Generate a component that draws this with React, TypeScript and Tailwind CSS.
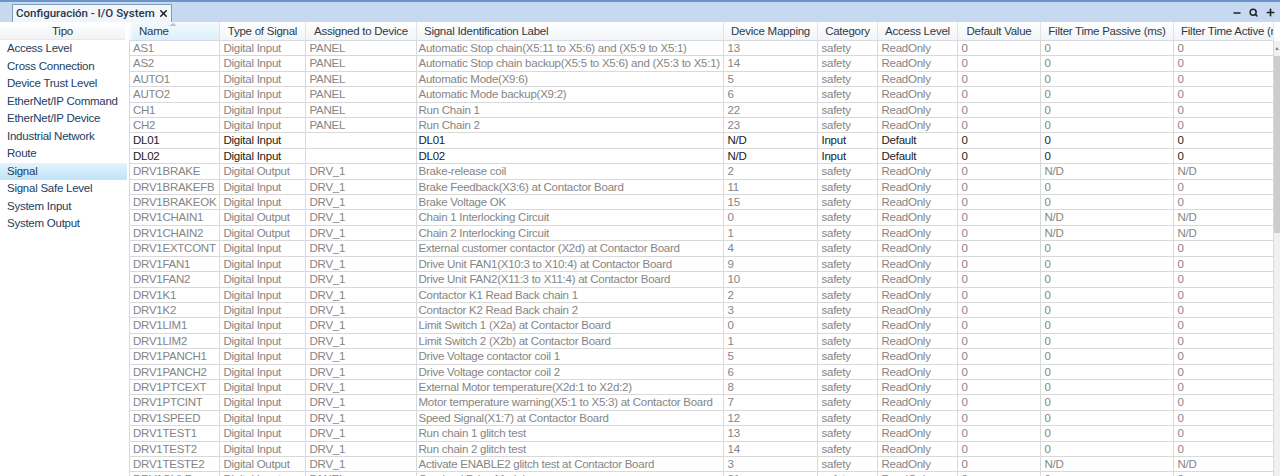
import React from 'react';
import { X, Search, Minus, Plus } from 'lucide-react';

const tipos = [
  'Access Level',
  'Cross Connection',
  'Device Trust Level',
  'EtherNet/IP Command',
  'EtherNet/IP Device',
  'Industrial Network',
  'Route',
  'Signal',
  'Signal Safe Level',
  'System Input',
  'System Output',
];

const columns = [
  { label: 'Name', width: 'w-[91px]' },
  { label: 'Type of Signal', width: 'w-[86px]' },
  { label: 'Assigned to Device', width: 'w-[111px]' },
  { label: 'Signal Identification Label', width: 'w-[307px]' },
  { label: 'Device Mapping', width: 'w-[94px]' },
  { label: 'Category', width: 'w-[60px]' },
  { label: 'Access Level', width: 'w-[80px]' },
  { label: 'Default Value', width: 'w-[83px]' },
  { label: 'Filter Time Passive (ms)', width: 'w-[133px]' },
  { label: 'Filter Time Active (ms)', width: 'w-[100px]' },
];

const DI = 'Digital Input';
const DO = 'Digital Output';

// name, type, device, label, mapping, passive/active filter
const signals: [string, string, string, string, string, string?][] = [
  ['AS1', DI, 'PANEL', 'Automatic Stop chain(X5:11 to X5:6) and (X5:9 to X5:1)', '13'],
  ['AS2', DI, 'PANEL', 'Automatic Stop chain backup(X5:5 to X5:6) and (X5:3 to X5:1)', '14'],
  ['AUTO1', DI, 'PANEL', 'Automatic Mode(X9:6)', '5'],
  ['AUTO2', DI, 'PANEL', 'Automatic Mode backup(X9:2)', '6'],
  ['CH1', DI, 'PANEL', 'Run Chain 1', '22'],
  ['CH2', DI, 'PANEL', 'Run Chain 2', '23'],
  ['DL01', DI, '', 'DL01', 'N/D'],
  ['DL02', DI, '', 'DL02', 'N/D'],
  ['DRV1BRAKE', DO, 'DRV_1', 'Brake-release coil', '2', 'N/D'],
  ['DRV1BRAKEFB', DI, 'DRV_1', 'Brake Feedback(X3:6) at Contactor Board', '11'],
  ['DRV1BRAKEOK', DI, 'DRV_1', 'Brake Voltage OK', '15'],
  ['DRV1CHAIN1', DO, 'DRV_1', 'Chain 1 Interlocking Circuit', '0', 'N/D'],
  ['DRV1CHAIN2', DO, 'DRV_1', 'Chain 2 Interlocking Circuit', '1', 'N/D'],
  ['DRV1EXTCONT', DI, 'DRV_1', 'External customer contactor (X2d) at Contactor Board', '4'],
  ['DRV1FAN1', DI, 'DRV_1', 'Drive Unit FAN1(X10:3 to X10:4) at Contactor Board', '9'],
  ['DRV1FAN2', DI, 'DRV_1', 'Drive Unit FAN2(X11:3 to X11:4) at Contactor Board', '10'],
  ['DRV1K1', DI, 'DRV_1', 'Contactor K1 Read Back chain 1', '2'],
  ['DRV1K2', DI, 'DRV_1', 'Contactor K2 Read Back chain 2', '3'],
  ['DRV1LIM1', DI, 'DRV_1', 'Limit Switch 1 (X2a) at Contactor Board', '0'],
  ['DRV1LIM2', DI, 'DRV_1', 'Limit Switch 2 (X2b) at Contactor Board', '1'],
  ['DRV1PANCH1', DI, 'DRV_1', 'Drive Voltage contactor coil 1', '5'],
  ['DRV1PANCH2', DI, 'DRV_1', 'Drive Voltage contactor coil 2', '6'],
  ['DRV1PTCEXT', DI, 'DRV_1', 'External Motor temperature(X2d:1 to X2d:2)', '8'],
  ['DRV1PTCINT', DI, 'DRV_1', 'Motor temperature warning(X5:1 to X5:3) at Contactor Board', '7'],
  ['DRV1SPEED', DI, 'DRV_1', 'Speed Signal(X1:7) at Contactor Board', '12'],
  ['DRV1TEST1', DI, 'DRV_1', 'Run chain 1 glitch test', '13'],
  ['DRV1TEST2', DI, 'DRV_1', 'Run chain 2 glitch test', '14'],
  ['DRV1TESTE2', DO, 'DRV_1', 'Activate ENABLE2 glitch test at Contactor Board', '3', 'N/D'],
  ['DRV1OVLD', DI, 'PANEL', 'Overload Drive Module', '21'],
];

const Cell = ({ width, children }: { width: string; children?: React.ReactNode }) => (
  <div className={`${width} shrink-0 h-full border-r border-[#d9d9d9] pl-[3.5px] overflow-hidden whitespace-nowrap leading-[15px]`}>
    {children}
  </div>
);

const App = () => {
  return (
    <div className="w-[1280px] h-[476px] overflow-hidden bg-white flex flex-col font-['Liberation_Sans',Arial,sans-serif] text-[11.5px] tracking-[-0.25px]">
      {/* Document tab strip */}
      <div className="h-[22px] shrink-0 bg-[#c6d9f0] border-t-2 border-[#6b93cc] flex items-end justify-between pl-[12px] pr-[4px]">
        <div className="h-[18px] w-[160px] bg-[#f2f6fb] border border-b-0 border-[#7f9db9] flex items-center pl-[3px] gap-[3px] font-['Roboto',sans-serif] font-medium tracking-normal text-[#25384c] text-[11.5px] whitespace-nowrap">
          <span>Configuración - I/O System</span>
          <X size={11} strokeWidth={3} className="text-[#111] shrink-0" />
        </div>
        <div className="flex items-center gap-[7px] pb-[4px] text-[#222]">
          <Minus size={10} strokeWidth={4} />
          <Search size={9} strokeWidth={4} />
          <Plus size={11} strokeWidth={3.5} />
        </div>
      </div>

      <div className="flex flex-1 min-h-0">
        {/* Tipo list */}
        <div className="w-[127px] shrink-0">
          <div className="h-[18px] mr-[2px] bg-gradient-to-b from-white to-[#f0f2f5] border-b border-[#e6e8ec] text-center text-[#333] leading-[18px]">
            Tipo
          </div>
          <div className="flex flex-col">
            {tipos.map((t) => (
              <div
                key={t}
                className={`h-[17.5px] pl-[7px] leading-[17px] text-[#22405f] ${t === 'Signal' ? 'bg-gradient-to-b from-[#e4f3fc] to-[#bfe3f8]' : ''}`}
              >
                {t}
              </div>
            ))}
          </div>
        </div>

        {/* Signals grid */}
        <div className="ml-[2px] flex-1 min-w-0 flex overflow-hidden">
          <div className="flex-1 min-w-0 overflow-hidden">
            <div className="h-[19px] pl-[3px] flex text-[#2d3a48] bg-gradient-to-b from-white to-[#f2f4f7] border-b border-[#d6dbe1]">
              {columns.map((c, i) => (
                <div
                  key={c.label}
                  className={`${i === 0 ? 'w-[88px] pl-[7px] bg-gradient-to-b from-[#f4fafd] to-[#dcf0fb] border-[#bfe3f8]' : c.width} shrink-0 relative whitespace-nowrap overflow-hidden leading-[18px] border-r border-[#e1e4e8] ${i === 3 ? 'pl-[7px]' : i === 9 ? 'pl-[7px]' : i === 0 ? '' : 'text-center'}`}
                >
                  {c.label}
                  {i === 0 && (
                    <span className="absolute left-[37px] top-[1px] w-0 h-0 border-x-[4px] border-x-transparent border-b-[3px] border-b-[#b8c4d0]" />
                  )}
                </div>
              ))}
            </div>
            <div className="border-l border-[#d9d9d9]">
              {signals.map(([name, type, device, label, mapping, filter]) => {
                const isInput = name === 'DL01' || name === 'DL02';
                return (
                  <div
                    key={name}
                    className={`h-[15.41px] flex border-b border-[#d9d9d9] ${isInput ? 'text-[#222222]' : 'text-[#858585]'}`}
                  >
                    <Cell width="w-[90px] !pl-[3px]">{name}</Cell>
                    <Cell width={columns[1].width}>{type}</Cell>
                    <Cell width={columns[2].width}>{device}</Cell>
                    <Cell width="w-[307px] !pl-[1.5px]">{label}</Cell>
                    <Cell width={columns[4].width}>{mapping}</Cell>
                    <Cell width={columns[5].width}>{isInput ? 'Input' : 'safety'}</Cell>
                    <Cell width={columns[6].width}>{isInput ? 'Default' : 'ReadOnly'}</Cell>
                    <Cell width={columns[7].width}>0</Cell>
                    <Cell width={columns[8].width}>{filter ?? '0'}</Cell>
                    <Cell width={columns[9].width}>{filter ?? '0'}</Cell>
                  </div>
                );
              })}
            </div>
          </div>
          {/* Vertical scrollbar */}
          <div className="w-[6px] shrink-0 flex flex-col pt-[19px]">
            <div className="flex-1 bg-[#f0f0f0] flex flex-col">
              <div className="h-[15px] flex items-center justify-center">
                <span className="w-0 h-0 border-x-[2px] border-x-transparent border-b-[3px] border-b-[#8a8a8a]" />
              </div>
              <div className="h-[177px] bg-[#cdcdcd]" />
            </div>
          </div>
        </div>
      </div>
    </div>
  );
};

export default App;
